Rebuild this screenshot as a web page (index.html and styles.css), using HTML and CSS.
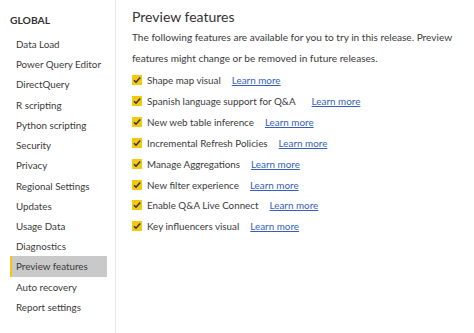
FILE: index.html
```html
<!DOCTYPE html>
<html>
<head>
<meta charset="utf-8">
<link rel="stylesheet" href="styles.css">
</head>
<body>
<div class="app">
  <nav class="side">
    <div class="side-head">GLOBAL</div>
    <ul class="menu">
      <li>Data Load</li>
      <li>Power Query Editor</li>
      <li>DirectQuery</li>
      <li>R scripting</li>
      <li>Python scripting</li>
      <li>Security</li>
      <li>Privacy</li>
      <li>Regional Settings</li>
      <li>Updates</li>
      <li>Usage Data</li>
      <li>Diagnostics</li>
      <li class="active">Preview features</li>
      <li>Auto recovery</li>
      <li>Report settings</li>
    </ul>
  </nav>
  <main class="main">
    <h1 class="title">Preview features</h1>
    <p class="desc">The following features are available for you to try in this release. Preview features might change or be removed in future releases.</p>
    <ul class="features">
      <li><span class="cb"><svg viewBox="0 0 10 10"><path d="M2 5.2 L4 7.2 L8.2 2.6" fill="none" stroke="#333" stroke-width="1.5"/></svg></span>Shape map visual<a href="#">Learn more</a></li>
      <li><span class="cb"><svg viewBox="0 0 10 10"><path d="M2 5.2 L4 7.2 L8.2 2.6" fill="none" stroke="#333" stroke-width="1.5"/></svg></span>Spanish language support for Q&amp;A<a href="#" class="wide">Learn more</a></li>
      <li><span class="cb"><svg viewBox="0 0 10 10"><path d="M2 5.2 L4 7.2 L8.2 2.6" fill="none" stroke="#333" stroke-width="1.5"/></svg></span>New web table inference<a href="#">Learn more</a></li>
      <li><span class="cb"><svg viewBox="0 0 10 10"><path d="M2 5.2 L4 7.2 L8.2 2.6" fill="none" stroke="#333" stroke-width="1.5"/></svg></span>Incremental Refresh Policies<a href="#">Learn more</a></li>
      <li><span class="cb"><svg viewBox="0 0 10 10"><path d="M2 5.2 L4 7.2 L8.2 2.6" fill="none" stroke="#333" stroke-width="1.5"/></svg></span>Manage Aggregations<a href="#">Learn more</a></li>
      <li><span class="cb"><svg viewBox="0 0 10 10"><path d="M2 5.2 L4 7.2 L8.2 2.6" fill="none" stroke="#333" stroke-width="1.5"/></svg></span>New filter experience<a href="#">Learn more</a></li>
      <li><span class="cb"><svg viewBox="0 0 10 10"><path d="M2 5.2 L4 7.2 L8.2 2.6" fill="none" stroke="#333" stroke-width="1.5"/></svg></span>Enable Q&amp;A Live Connect<a href="#">Learn more</a></li>
      <li><span class="cb"><svg viewBox="0 0 10 10"><path d="M2 5.2 L4 7.2 L8.2 2.6" fill="none" stroke="#333" stroke-width="1.5"/></svg></span>Key influencers visual<a href="#">Learn more</a></li>
    </ul>
  </main>
</div>
</body>
</html>
```
FILE: styles.css
```css
html, body {
  margin: 0;
  padding: 0;
  background: #fff;
}
body {
  font-family: Lato, "Open Sans", sans-serif;
  color: #3a3a3a;
  width: 474px;
  height: 333px;
  overflow: hidden;
}
.app {
  display: flex;
  height: 333px;
}
.side {
  width: 116px;
  border-right: 1px solid #e8e8e8;
  padding-top: 13px;
  box-sizing: border-box;
  flex: none;
}
.side-head {
  font-size: 10.3px;
  font-weight: 700;
  color: #333;
  padding-left: 10px;
  height: 14px;
  line-height: 14px;
  margin-bottom: 7px;
}
.menu {
  list-style: none;
  margin: 0;
  padding: 0;
}
.menu li {
  font-size: 9.8px;
  height: 20.23px;
  line-height: 20.23px;
  margin-left: 10px;
  width: 97px;
  padding-left: 6px;
  box-sizing: border-box;
  white-space: nowrap;
  color: #3a3a3a;
}
.menu li.active {
  background: #c9c9c9;
  border-left: 2px solid #f2c811;
  padding-left: 4px;
}
.main {
  padding: 7px 0 0 16px;
  flex: 1;
}
.title {
  font-size: 14px;
  font-weight: 400;
  margin: 0;
  line-height: 20px;
  color: #333;
}
.desc {
  font-size: 10.1px;
  line-height: 21px;
  margin: 0;
  width: 330px;
  color: #3a3a3a;
}
.features {
  list-style: none;
  margin: 1px 0 0 0;
  padding: 0;
}
.features li {
  display: flex;
  align-items: center;
  height: 20.85px;
  font-size: 9.8px;
  color: #3a3a3a;
  white-space: nowrap;
}
.cb {
  width: 10px;
  height: 10px;
  background: #f2c811;
  margin-right: 5px;
  flex: none;
  display: flex;
}
.cb svg {
  width: 10px;
  height: 10px;
}
.features a {
  font-size: 9.9px;
  color: #3560b8;
  text-decoration: underline;
  margin-left: 11px;
}
.features a.wide {
  margin-left: 16px;
}
```
